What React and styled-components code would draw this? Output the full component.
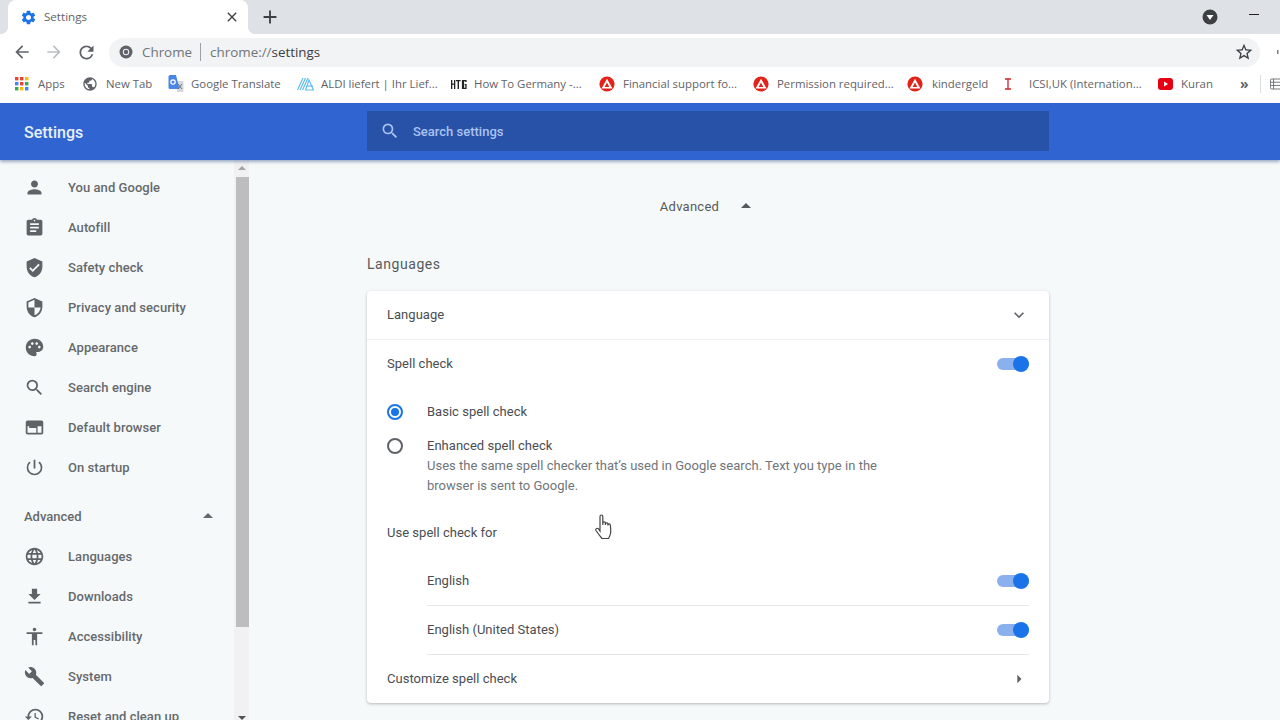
import React from "react";
import styled, { createGlobalStyle } from "styled-components";
import {
  MdPerson, MdAssignment, MdVerifiedUser, MdSecurity, MdPalette, MdSearch,
  MdPowerSettingsNew, MdLanguage, MdFileDownload, MdAccessibility, MdBuild, MdHistory,
  MdArrowBack, MdArrowForward, MdRefresh, MdStarBorder, MdClose, MdAdd,
  MdExpandMore, MdArrowDropUp, MdArrowRight, MdPublic, MdSettings,
} from "react-icons/md";

const Global = createGlobalStyle`
  html, body { margin: 0; padding: 0; width: 1280px; height: 720px; overflow: hidden; background: #f6f9f9; }
  * { box-sizing: border-box; }
  #root { width: 1280px; height: 720px; overflow: hidden; font-family: Roboto, "Liberation Sans", sans-serif; }
`;

const Page = styled.div`
  position: relative;
  width: 1280px;
  height: 720px;
  display: flex;
  flex-direction: column;
  overflow: hidden;
`;

const TabStrip = styled.div`
  height: 34px;
  flex: none;
  background: #dee1e6;
  display: flex;
  align-items: stretch;
  padding-left: 8px;
`;
const Tab = styled.div`
  position: relative;
  width: 240px;
  background: #fff;
  border-radius: 8px 8px 0 0;
  display: flex;
  align-items: center;
  padding: 0 8px 0 12px;
  font: 11.6px "Open Sans", sans-serif;
  color: #5f6368;
  &::before, &::after {
    content: "";
    position: absolute;
    bottom: 0;
    width: 8px;
    height: 8px;
  }
  &::before { left: -8px; background: radial-gradient(circle at 0 0, #dee1e6 8px, #fff 8.5px); }
  &::after { right: -8px; background: radial-gradient(circle at 100% 0, #dee1e6 8px, #fff 8.5px); }
`;
const TabTitle = styled.span`
  flex: 1;
  margin-left: 7px;
  margin-bottom: 1px;
`;
const NewTab = styled.div`
  margin-left: 11px;
  display: flex;
  align-items: center;
  color: #3c4043;
`;
const StripEnd = styled.div`
  margin-left: auto;
  display: flex;
  align-items: center;
  padding-right: 21px;
  gap: 31px;
`;
const Minimize = styled.div`
  width: 10px;
  height: 1px;
  background: #222;
  margin-bottom: 6px;
`;

const Toolbar = styled.div`
  height: 36px;
  flex: none;
  background: #fff;
  display: flex;
  align-items: center;
  padding: 0 0 0 12px;
`;
const NavButtons = styled.div`
  display: flex;
  align-items: center;
  gap: 12px;
  width: 97px;
`;
const Omnibox = styled.div`
  width: 1151px;
  height: 29px;
  border-radius: 15px;
  background: #f1f3f4;
  display: flex;
  align-items: center;
  padding: 0 6px 0 10px;
  font: 13.4px "Open Sans", sans-serif;
  color: #70757a;
`;
const OriginChip = styled.span`
  margin-left: 9px;
  padding-right: 8px;
  border-right: 1px solid #9aa0a6;
  line-height: 18px;
  color: #70757a;
`;
const Url = styled.span`
  margin-left: 9px;
  flex: 1;
  color: #70757a;
  b { font-weight: 400; color: #3c4043; }
`;
const ExtClip = styled.div`
  flex: 1;
  display: flex;
  padding-left: 17px;
  overflow: hidden;
`;

const Bookmarks = styled.div`
  height: 33px;
  flex: none;
  background: #fff;
  display: flex;
  align-items: center;
  padding-left: 15px;
  padding-bottom: 6px;
  font: 11.4px "Open Sans", sans-serif;
  color: #5f6368;
  white-space: nowrap;
  overflow: hidden;
`;
const Bookmark = styled.div`
  flex: none;
  width: ${(p) => p.$w}px;
  display: flex;
  align-items: center;
`;
const BmIcon = styled.span`
  flex: none;
  width: ${(p) => p.$w}px;
  display: flex;
  align-items: center;
`;
const Chevrons = styled.span`
  flex: none;
  margin-left: 20px;
  font-size: 14px;
  font-weight: 700;
  color: #5f6368;
  width: 20px;
  line-height: 16px;
`;
const BarSep = styled.span`
  flex: none;
  width: 1px;
  height: 18px;
  background: #dadce0;
  margin-right: 9px;
`;

const Header = styled.header`
  position: relative;
  z-index: 2;
  height: 57px;
  flex: none;
  background: #3064d0;
  box-shadow: 0 2px 3px rgba(48, 80, 140, 0.45);
  display: flex;
  align-items: center;
  color: #fff;
`;
const HeaderTitle = styled.div`
  width: 367px;
  padding: 1px 0 0 24px;
  font-size: 16px;
  font-weight: 500;
  color: #e8f0fe;
`;
const SearchBox = styled.div`
  width: 682px;
  height: 40px;
  background: #2851a8;
  display: flex;
  align-items: center;
  gap: 13px;
  padding-left: 13px;
  font-size: 13px;
  font-weight: 500;
  color: #a9c3f2;
  margin-top: -1px;
`;

const Body = styled.div`
  flex: 1;
  display: flex;
  min-height: 0;
  background: #f6f9f9;
`;
const Sidebar = styled.nav`
  width: 234px;
  flex: none;
  padding-top: 7px;
  font-size: 13px;
  font-weight: 500;
  color: #65696d;
`;
const NavItem = styled.div`
  height: 40px;
  display: flex;
  align-items: center;
  padding-left: 24px;
  letter-spacing: 0.05px;
`;
const NavIcon = styled.span`
  width: 44px;
  flex: none;
  display: flex;
  color: #5f6368;
`;
const AdvancedRow = styled.div`
  height: 40px;
  margin-top: 9px;
  display: flex;
  align-items: center;
  justify-content: space-between;
  padding: 0 14px 0 24px;
`;
const Scrollbar = styled.div`
  width: 15px;
  flex: none;
  background: #f1f1f1;
  display: flex;
  flex-direction: column;
  align-items: flex-end;
  position: relative;
`;
const ScrollArrow = styled.div`
  position: absolute;
  left: 4px;
  width: 0;
  height: 0;
  border-left: 4px solid transparent;
  border-right: 4px solid transparent;
  ${(p) => (p.$down ? "bottom: 0; border-top: 4px solid #505050;" : "top: 6px; border-bottom: 4px solid #a3a3a3;")}
`;
const Thumb = styled.div`
  width: 13px;
  height: 450px;
  margin-top: 17px;
  background: #bdbdbd;
`;
const Main = styled.main`
  flex: 1;
  padding: 0 0 0 118px;
`;
const Column = styled.div`
  width: 682px;
`;
const AdvancedToggle = styled.div`
  height: 46px;
  display: flex;
  align-items: center;
  justify-content: center;
  gap: 18px;
  margin-top: 23px;
  padding-right: 1px;
  font-size: 13px;
  font-weight: 400;
  letter-spacing: 0.25px;
  color: #55595d;
`;
const Caret = styled(MdArrowDropUp)`
  margin: 0 -3px;
`;
const SectionTitle = styled.h2`
  margin: 0;
  height: 62px;
  padding-top: 26px;
  line-height: 18px;
  font-size: 14px;
  font-weight: 400;
  letter-spacing: 0.55px;
  color: #55595d;
`;
const Card = styled.section`
  background: #fff;
  border-radius: 4px;
  height: 412px;
  box-shadow: 0 1px 3px rgba(60, 64, 67, 0.35);
  font-size: 13px;
  letter-spacing: 0.02px;
  color: #4a4d51;
`;
const Row = styled.div`
  height: ${(p) => p.$h}px;
  display: flex;
  align-items: center;
  justify-content: space-between;
  padding: 0 20px;
  ${(p) => (p.$line ? "border-bottom: 1px solid #eceeef; padding-bottom: 1px;" : "")}
`;
const RowLabel = styled.span`
  margin-bottom: 2px;
`;
const IndentRow = styled.div`
  height: ${(p) => p.$h}px;
  margin: 0 20px 0 60px;
  display: flex;
  align-items: center;
  justify-content: space-between;
  ${(p) => (p.$line ? "border-bottom: 1px solid #e4e6e8;" : "")}
`;
const Toggle = styled.span`
  position: relative;
  width: 32px;
  height: 12px;
  border-radius: 6px;
  background: #8ab0ee;
  &::after {
    content: "";
    position: absolute;
    right: 0;
    top: -2px;
    width: 16px;
    height: 16px;
    border-radius: 50%;
    background: #1a73e8;
  }
`;
const RadioRow = styled.div`
  display: flex;
  padding-left: 20px;
  height: ${(p) => p.$h}px;
`;
const Radio = styled.span`
  flex: none;
  width: 16px;
  height: 16px;
  margin-top: ${(p) => p.$top}px;
  border-radius: 50%;
  border: 2px solid ${(p) => (p.$on ? "#1a73e8" : "#5f6368")};
  display: flex;
  align-items: center;
  justify-content: center;
  &::after {
    content: "";
    width: 8px;
    height: 8px;
    border-radius: 50%;
    background: ${(p) => (p.$on ? "#1a73e8" : "transparent")};
  }
`;
const RadioText = styled.div`
  margin-left: 24px;
  line-height: 20px;
  padding-top: ${(p) => p.$top}px;
`;
const Secondary = styled.div`
  width: 470px;
  color: #70757a;
`;
const Cursor = styled.svg`
  position: absolute;
  left: 595px;
  top: 514px;
`;

const navTop = [
  [MdPerson, "You and Google"],
  [MdAssignment, "Autofill"],
  [MdVerifiedUser, "Safety check"],
  [MdSecurity, "Privacy and security"],
  [MdPalette, "Appearance"],
  [MdSearch, "Search engine"],
  [BrowserIcon, "Default browser"],
  [MdPowerSettingsNew, "On startup"],
];
const navAdvanced = [
  [MdLanguage, "Languages"],
  [MdFileDownload, "Downloads"],
  [MdAccessibility, "Accessibility"],
  [MdBuild, "System"],
  [MdHistory, "Reset and clean up"],
];

function BrowserIcon({ size }) {
  return (
    <svg width={size} height={size} viewBox="0 0 24 24" fill="currentColor" fillRule="evenodd">
      <path d="M4 4h16a2 2 0 0 1 2 2v12a2 2 0 0 1-2 2H4a2 2 0 0 1-2-2V6a2 2 0 0 1 2-2zM4 10.500V18h10v-5.500H6v2h-.001V10.500zM15.500 10.500V18H20v-7.500z" />
    </svg>
  );
}
function AppsIcon() {
  const c = ["#ea4335", "#ea4335", "#fbbc04", "#4285f4", "#ea4335", "#34a853", "#34a853", "#fbbc04", "#4285f4"];
  return (
    <svg width="14" height="14" viewBox="0 0 14 14">
      {c.map((f, i) => (
        <rect key={i} x={(i % 3) * 5} y={Math.floor(i / 3) * 5} width="3.4" height="3.4" fill={f} />
      ))}
    </svg>
  );
}
function ChromeGray() {
  return (
    <svg width="14" height="14" viewBox="0 0 14 14">
      <circle cx="7" cy="7" r="6.5" fill="#5f6368" />
      <circle cx="7" cy="7" r="3.2" fill="#f1f3f4" />
      <circle cx="7" cy="7" r="2.2" fill="#5f6368" />
    </svg>
  );
}
function TranslateIcon() {
  return (
    <svg width="18" height="18" viewBox="0 0 18 18">
      <path d="M9 6h7.5v11H10z" fill="#d5d8dc" />
      <path d="M1.5 1.5A1.5 1.5 0 0 1 3 0h6l3.5 14H3a1.5 1.5 0 0 1-1.5-1.5z" fill="#4a86e8" />
      <circle cx="6" cy="7" r="2.2" fill="none" stroke="#fff" strokeWidth="1.2" />
      <path d="M11 9l4 5M15 9l-4 5" stroke="#70757a" strokeWidth="1" />
    </svg>
  );
}
function AldiIcon() {
  return (
    <svg width="17" height="14" viewBox="0 0 17 14" fill="none" stroke="#62bdea" strokeWidth="1.2">
      <path d="M0.5 13L6 1M3 13L8.5 1M5.5 13L11 1M8.5 13l3.5-10l4.5 10z" />
      <path d="M10 9h6" />
    </svg>
  );
}
function HtgIcon() {
  return (
    <svg width="16" height="12" viewBox="0 0 16 12" fill="#222">
      <path d="M0 2h1.300v3.500H3V2h1.300v9H3V6.700H1.300V11H0zM5 2h4.600v1.300H8V11H6.600V3.300H5zM15.600 4H14.300v-.8h-1.200v6.600h1.200V7.300h-.6V6h1.900v5h-4.700V2h4.700z" />
    </svg>
  );
}
function ArbeitIcon() {
  return (
    <svg width="16" height="16" viewBox="0 0 16 16">
      <circle cx="8" cy="8" r="7.600" fill="#e2231a" />
      <path d="M8 2.800L13.500 12.500H2.500z" fill="#fff" />
      <path d="M8 6.500L10.300 11H5.700z" fill="#e2231a" />
    </svg>
  );
}
function YoutubeIcon() {
  return (
    <svg width="15" height="12" viewBox="0 0 15 12">
      <rect width="15" height="12" rx="3" fill="#e60012" />
      <path d="M6 3.500L10 6L6 8.500z" fill="#fff" />
    </svg>
  );
}
function ProfileDot() {
  return (
    <svg width="16" height="16" viewBox="0 0 16 16">
      <circle cx="8" cy="8" r="7.500" fill="#3c4043" />
      <path d="M4.500 6h7L8 11z" fill="#fff" />
    </svg>
  );
}
function ReadingList() {
  return (
    <svg width="14" height="16" viewBox="0 0 14 16" fill="none" stroke="#5f6368" strokeWidth="1.200">
      <rect x="0.600" y="1" width="16" height="14" rx="1.500" />
      <path d="M0.600 5.500H16M0.600 10H16M5 1v14" />
    </svg>
  );
}
function ExtensionBit() {
  return (
    <svg width="12" height="14" viewBox="0 0 12 14" fill="#3c4043">
      <rect x="0" y="0" width="6" height="6" rx="1.500" />
      <rect x="0" y="8" width="6" height="6" rx="1.500" />
    </svg>
  );
}

export default function App() {
  return (
    <Page>
      <Global />
      <TabStrip>
        <Tab>
          <MdSettings size={17} color="#1a73e8" />
          <TabTitle>Settings</TabTitle>
          <MdClose size={16} color="#3c4043" />
        </Tab>
        <NewTab>
          <MdAdd size={22} />
        </NewTab>
        <StripEnd>
          <ProfileDot />
          <Minimize />
        </StripEnd>
      </TabStrip>
      <Toolbar>
        <NavButtons>
          <MdArrowBack size={20} color="#5f6368" />
          <MdArrowForward size={20} color="#bcbfc3" />
          <MdRefresh size={21} color="#5f6368" />
        </NavButtons>
        <Omnibox>
          <ChromeGray />
          <OriginChip>Chrome</OriginChip>
          <Url>
            chrome://<b>settings</b>
          </Url>
          <MdStarBorder size={20} color="#3c4043" />
        </Omnibox>
        <ExtClip>
          <ExtensionBit />
        </ExtClip>
      </Toolbar>
      <Bookmarks>
        <Bookmark $w={67}><BmIcon $w={23}><AppsIcon /></BmIcon>Apps</Bookmark>
        <Bookmark $w={85}><BmIcon $w={24}><MdPublic size={16} color="#5f6368" /></BmIcon>New Tab</Bookmark>
        <Bookmark $w={130}><BmIcon $w={24}><TranslateIcon /></BmIcon>Google Translate</Bookmark>
        <Bookmark $w={154}><BmIcon $w={24}><AldiIcon /></BmIcon>ALDI liefert | Ihr Lief...</Bookmark>
        <Bookmark $w={148}><BmIcon $w={23}><HtgIcon /></BmIcon>How To Germany -...</Bookmark>
        <Bookmark $w={154}><BmIcon $w={24}><ArbeitIcon /></BmIcon>Financial support fo...</Bookmark>
        <Bookmark $w={154}><BmIcon $w={24}><ArbeitIcon /></BmIcon>Permission required...</Bookmark>
        <Bookmark $w={97}><BmIcon $w={25}><ArbeitIcon /></BmIcon>kindergeld</Bookmark>
        <Bookmark $w={154}>
          <BmIcon $w={25}>
            <svg width="8" height="12" viewBox="0 0 8 12" fill="none" stroke="#d2232a" strokeWidth="1.300"><path d="M1 1h6M4 1v10M1 11h6" /></svg>
          </BmIcon>
          ICSI,UK (Internation...
        </Bookmark>
        <Bookmark $w={62}><BmIcon $w={23}><YoutubeIcon /></BmIcon>Kuran</Bookmark>
        <Chevrons>»</Chevrons>
        <BarSep />
        <ReadingList />
      </Bookmarks>
      <Header>
        <HeaderTitle>Settings</HeaderTitle>
        <SearchBox>
          <MdSearch size={20} color="#a9c3f2" />
          Search settings
        </SearchBox>
      </Header>
      <Body>
        <Sidebar>
          {navTop.map(([Icon, label]) => (
            <NavItem key={label}>
              <NavIcon><Icon size={21} /></NavIcon>
              {label}
            </NavItem>
          ))}
          <AdvancedRow>
            Advanced
            <MdArrowDropUp size={24} />
          </AdvancedRow>
          {navAdvanced.map(([Icon, label]) => (
            <NavItem key={label}>
              <NavIcon><Icon size={21} /></NavIcon>
              {label}
            </NavItem>
          ))}
        </Sidebar>
        <Scrollbar>
          <ScrollArrow />
          <Thumb />
          <ScrollArrow $down />
        </Scrollbar>
        <Main>
          <Column>
            <AdvancedToggle>
              Advanced
              <Caret size={24} />
            </AdvancedToggle>
            <SectionTitle>Languages</SectionTitle>
            <Card>
              <Row $h={49} $line>
                Language
                <MdExpandMore size={20} color="#5f6368" />
              </Row>
              <Row $h={48}>
                <RowLabel>Spell check</RowLabel>
                <Toggle />
              </Row>
              <RadioRow $h={40}>
                <Radio $on $top={16} />
                <RadioText $top={14}>Basic spell check</RadioText>
              </RadioRow>
              <RadioRow $h={80}>
                <Radio $top={10} />
                <RadioText $top={8}>
                  Enhanced spell check
                  <Secondary>Uses the same spell checker that’s used in Google search. Text you type in the browser is sent to Google.</Secondary>
                </RadioText>
              </RadioRow>
              <Row $h={48}>Use spell check for</Row>
              <IndentRow $h={50} $line>
                English
                <Toggle />
              </IndentRow>
              <IndentRow $h={49} $line>
                <RowLabel>English (United States)</RowLabel>
                <Toggle />
              </IndentRow>
              <Row $h={48}>
                <RowLabel>Customize spell check</RowLabel>
                <MdArrowRight size={20} color="#5f6368" />
              </Row>
            </Card>
          </Column>
        </Main>
      </Body>
      <Cursor width="20" height="26" viewBox="0 0 20 26" fill="#fff" stroke="#444" strokeWidth="1.200">
        <path d="M5 2.500c0-2 2.800-2 2.800 0V11V9c0-1.600 2.600-1.600 2.600 0v2-1c0-1.500 2.500-1.500 2.500 0v1.500-.5c0-1.400 2.400-1.400 2.400 0 .4 3 .7 6 .2 8.500-.5 2.500-1.500 3.800-2 5H7c-1.500-1.800-4-5-6-8-.8-1.400.8-3 2.400-1.800L5 17z" />
      </Cursor>
    </Page>
  );
}
